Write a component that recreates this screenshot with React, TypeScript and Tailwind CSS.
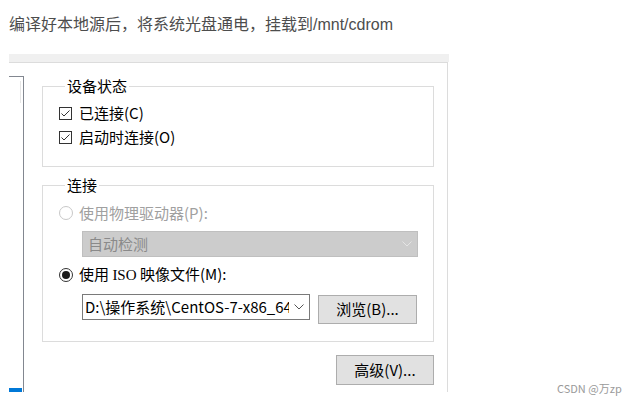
import React from 'react';

const font = { fontFamily: '"Noto Sans CJK SC", "Noto Sans", sans-serif' };

const Checkbox: React.FC = () => (
  <span className="w-[13px] h-[13px] border border-[#333333] bg-white flex items-center justify-center shrink-0">
    <svg width="11" height="11" viewBox="0 0 11 11">
      <polyline points="1.5,5.5 4,8 9.5,2.5" fill="none" stroke="#333333" strokeWidth="1" />
    </svg>
  </span>
);

const Radio: React.FC<{ checked?: boolean; disabled?: boolean }> = ({ checked, disabled }) => (
  <span
    className={`w-[14px] h-[14px] rounded-full border bg-white flex items-center justify-center shrink-0 ${
      disabled ? 'border-[#c8c8c8]' : 'border-[#333333]'
    }`}
  >
    {checked && <span className="w-[8px] h-[8px] rounded-full bg-[#1a1a1a]"></span>}
  </span>
);

const Chevron: React.FC<{ color: string }> = ({ color }) => (
  <svg width="10" height="6" viewBox="0 0 10 6">
    <polyline points="0.5,0.5 5,5 9.5,0.5" fill="none" stroke={color} strokeWidth="1" />
  </svg>
);

const App: React.FC = () => {
  return (
    <div className="relative w-[634px] h-[403px] bg-white overflow-hidden" style={font}>
      {/* Article line */}
      <p
        className="pl-[9px] pt-[13px] text-[16px] leading-[24px] text-[#4d4d4d]"
        style={{ fontFamily: '"Liberation Sans", "Noto Sans CJK SC", sans-serif' }}
      >
        编译好本地源后，将系统光盘通电，挂载到/mnt/cdrom
      </p>

      {/* Embedded dialog screenshot */}
      <div className="ml-[9px] mt-[17px] w-[440px]">
        <div className="h-[8px] bg-[#f0f0f0]"></div>
        <div className="flex h-[330px] w-[439px] border-t border-r border-[#dcdcdc] text-[15px] text-black">
          {/* Left list (cut off) */}
          <div className="relative mt-[13px] w-[15px] border-t border-r border-[#828790]">
            <div className="absolute left-[11px] top-[4px] h-[22px] w-[1px] bg-[#e6e6e6]"></div>
            <div className="absolute left-0 bottom-0 w-[13px] h-[4px] bg-[#0078d7]"></div>
          </div>

          <div className="ml-[18px] w-[392px] flex flex-col">
            {/* 设备状态 */}
            <fieldset className="mt-[14px] border border-[#dcdcdc] pl-[16px] pt-[6px] pb-[17px]">
              <legend className="ml-[6px] px-[2px] leading-[18px]">设备状态</legend>
              <div className="flex items-center h-[24px] gap-[7px]">
                <Checkbox />
                <span>已连接(C)</span>
              </div>
              <div className="flex items-center h-[24px] gap-[7px]">
                <Checkbox />
                <span>启动时连接(O)</span>
              </div>
            </fieldset>

            {/* 连接 */}
            <fieldset className="mt-[9px] border border-[#dcdcdc] pl-[16px] pt-[7px] pb-[17px]">
              <legend className="ml-[6px] px-[2px] leading-[18px]">连接</legend>
              <div className="flex items-center h-[24px] gap-[6px] text-[#a0a0a0]">
                <Radio disabled />
                <span>使用物理驱动器(P):</span>
              </div>
              <div className="ml-[23px] mt-[6px] w-[336px] h-[26px] bg-[#cccccc] border border-[#bfbfbf] flex items-center justify-between pl-[5px] pr-[5px] text-[#8a8a8a]">
                <span>自动检测</span>
                <Chevron color="#e4e4e4" />
              </div>
              <div className="mt-[6px] flex items-center h-[24px] gap-[6px]">
                <Radio checked />
                <span>
                  使用 <span style={{ fontFamily: '"Liberation Serif", serif' }}>ISO</span> 映像文件(M):
                </span>
              </div>
              <div className="ml-[23px] mt-[7px] flex items-start gap-[8px]">
                <div className="w-[228px] h-[26px] border border-[#7a7a7a] bg-white flex items-center pl-[2px] pr-[5px]">
                  <span className="flex-1 overflow-hidden whitespace-nowrap">D:\操作系统\CentOS-7-x86_64</span>
                  <span className="ml-[5px]">
                    <Chevron color="#555555" />
                  </span>
                </div>
                <button className="mt-[1px] w-[99px] h-[29px] bg-[#e1e1e1] border border-[#adadad] flex items-center justify-center">
                  浏览(B)...
                </button>
              </div>
            </fieldset>

            <button className="self-end mt-[13px] w-[98px] h-[30px] bg-[#e1e1e1] border border-[#adadad] flex items-center justify-center">
              高级(V)...
            </button>
          </div>
        </div>
      </div>

      {/* Watermark */}
      <span className="absolute left-[557px] top-[380px] text-[11px] leading-[16px] text-[#9a9a9a]">CSDN @万zp</span>
    </div>
  );
};

export default App;
